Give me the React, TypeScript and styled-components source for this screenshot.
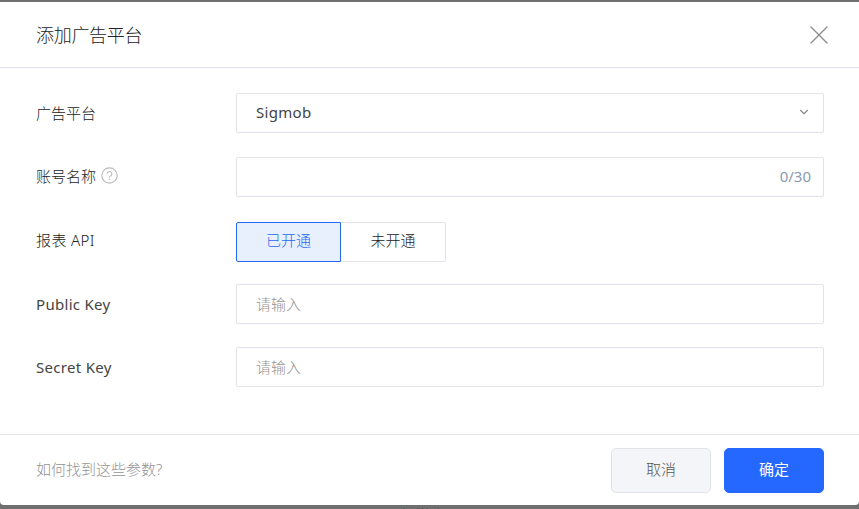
import React from "react";
import styled, { createGlobalStyle } from "styled-components";
import { ChevronDown, X } from "lucide-react";

const GlobalStyle = createGlobalStyle`
  html, body {
    margin: 0;
    padding: 0;
    height: 100%;
    overflow: hidden;
    background: #6f6f6f;
  }
  * {
    box-sizing: border-box;
  }
`;

const Page = styled.div`
  width: 859px;
  height: 509px;
  padding-top: 2px;
  overflow: hidden;
  background: #6f6f6f;
  font-family: "Noto Sans", "Noto Sans CJK SC", sans-serif;
  font-size: 15px;
  font-weight: 300;
  color: #222;
`;

const Modal = styled.div`
  width: 859px;
  height: 503px;
  display: flex;
  flex-direction: column;
  background: #fff;
  border-radius: 0 0 4px 4px;
`;

const BackdropText = styled.div`
  padding-left: 400px;
  font-size: 15px;
  line-height: 20px;
  color: #2f2f2f;
`;

const Header = styled.div`
  height: 66px;
  flex: none;
  display: flex;
  align-items: center;
  justify-content: space-between;
  padding: 0 24px 0 36px;
  border-bottom: 1px solid #e2e3ea;
`;

const Title = styled.h2`
  margin: 0 0 2px;
  font-size: 18px;
  font-weight: 300;
  letter-spacing: -0.3px;
  color: #222;
`;

const CloseButton = styled.button`
  display: flex;
  padding: 0;
  border: 0;
  background: none;
  color: #8c8c8c;
`;

const Form = styled.div`
  flex: 1;
  padding: 25px 35px 0 36px;
  display: flex;
  flex-direction: column;
`;

const Row = styled.div<{ $gap: number }>`
  display: flex;
  align-items: center;
  height: 40px;
  margin-bottom: ${(p) => p.$gap}px;
`;

const Label = styled.div<{ $lift: number; $latin?: boolean; $track?: number }>`
  width: 200px;
  flex: none;
  display: flex;
  align-items: center;
  gap: 5px;
  margin-top: -${(p) => p.$lift}px;
  font-weight: ${(p) => (p.$latin ? 400 : 300)};
  letter-spacing: ${(p) => p.$track ?? 0}px;
  white-space: pre;
  color: ${(p) => (p.$latin ? "#444" : "#222")};
`;

const Field = styled.div`
  flex: 1;
  height: 40px;
  display: flex;
  align-items: center;
  justify-content: space-between;
  padding: 0 12px 2px 19px;
  border: 1px solid #e2e3ea;
  border-radius: 2px;
  background: #fff;
`;

const Value = styled.span`
  font-weight: 400;
  letter-spacing: 0.3px;
  color: #444;
`;

const Placeholder = styled.span`
  color: #949494;
`;

const Counter = styled.span`
  margin-left: auto;
  font-weight: 400;
  color: #8a9bb0;
`;

const Toggle = styled.div`
  display: flex;
`;

const ToggleOption = styled.div<{ $active?: boolean }>`
  width: 105px;
  height: 40px;
  display: flex;
  align-items: center;
  justify-content: center;
  padding-bottom: 5px;
  border: 1px solid ${(p) => (p.$active ? "#2468f2" : "#e2e3ea")};
  border-left-width: ${(p) => (p.$active ? "1px" : "0")};
  border-radius: ${(p) => (p.$active ? "2px 0 0 2px" : "0 2px 2px 0")};
  background: ${(p) => (p.$active ? "#e8effd" : "#fff")};
  color: ${(p) => (p.$active ? "#2468f2" : "#222")};
`;

const Footer = styled.div`
  height: 71px;
  flex: none;
  display: flex;
  align-items: center;
  justify-content: space-between;
  padding: 0 35px 0 36px;
  border-top: 1px solid #e2e3ea;
`;

const HelpLink = styled.a`
  margin-top: -3px;
  color: #949494;
`;

const Actions = styled.div`
  display: flex;
  gap: 13px;
`;

const Button = styled.button<{ $primary?: boolean }>`
  width: 100px;
  height: 45px;
  padding: 0 0 3px;
  font: inherit;
  font-weight: ${(p) => (p.$primary ? 400 : 300)};
  border-radius: 5px;
  border: 1px solid ${(p) => (p.$primary ? "#2468ff" : "#e2e3ea")};
  background: ${(p) => (p.$primary ? "#2468ff" : "#f4f5f9")};
  color: ${(p) => (p.$primary ? "#fff" : "#555")};
`;

const HelpIcon = () => (
  <svg width="17" height="17" viewBox="0 0 17 17" fill="none" stroke="#bdbdbd" strokeWidth="1.2">
    <circle cx="8.5" cy="8.5" r="7.7" />
    <path d="M6.2 6.8a2.3 2.3 0 1 1 3.5 2c-.8.5-1.2.9-1.2 1.8" />
    <path d="M8.5 11.8v1.3" />
  </svg>
);

export default function App() {
  return (
    <Page>
      <GlobalStyle />
      <Modal>
        <Header>
          <Title>添加广告平台</Title>
          <CloseButton>
            <X size={32} strokeWidth={1.3} absoluteStrokeWidth />
          </CloseButton>
        </Header>
        <Form>
          <Row $gap={24}>
            <Label $lift={2}>广告平台</Label>
            <Field>
              <Value>Sigmob</Value>
              <ChevronDown size={14} color="#8c8c8c" />
            </Field>
          </Row>
          <Row $gap={25}>
            <Label $lift={4}>
              账号名称
              <HelpIcon />
            </Label>
            <Field>
              <Counter>0/30</Counter>
            </Field>
          </Row>
          <Row $gap={22}>
            <Label $lift={5} $track={0.4}>报表 API</Label>
            <Toggle>
              <ToggleOption $active>已开通</ToggleOption>
              <ToggleOption>未开通</ToggleOption>
            </Toggle>
          </Row>
          <Row $gap={23}>
            <Label $lift={1} $latin $track={0.3}>Public Key</Label>
            <Field>
              <Placeholder>请输入</Placeholder>
            </Field>
          </Row>
          <Row $gap={0}>
            <Label $lift={1} $latin $track={0.3}>Secret Key</Label>
            <Field>
              <Placeholder>请输入</Placeholder>
            </Field>
          </Row>
        </Form>
        <Footer>
          <HelpLink>如何找到这些参数?</HelpLink>
          <Actions>
            <Button>取消</Button>
            <Button $primary>确定</Button>
          </Actions>
        </Footer>
      </Modal>
      <BackdropText>新增账号</BackdropText>
    </Page>
  );
}
